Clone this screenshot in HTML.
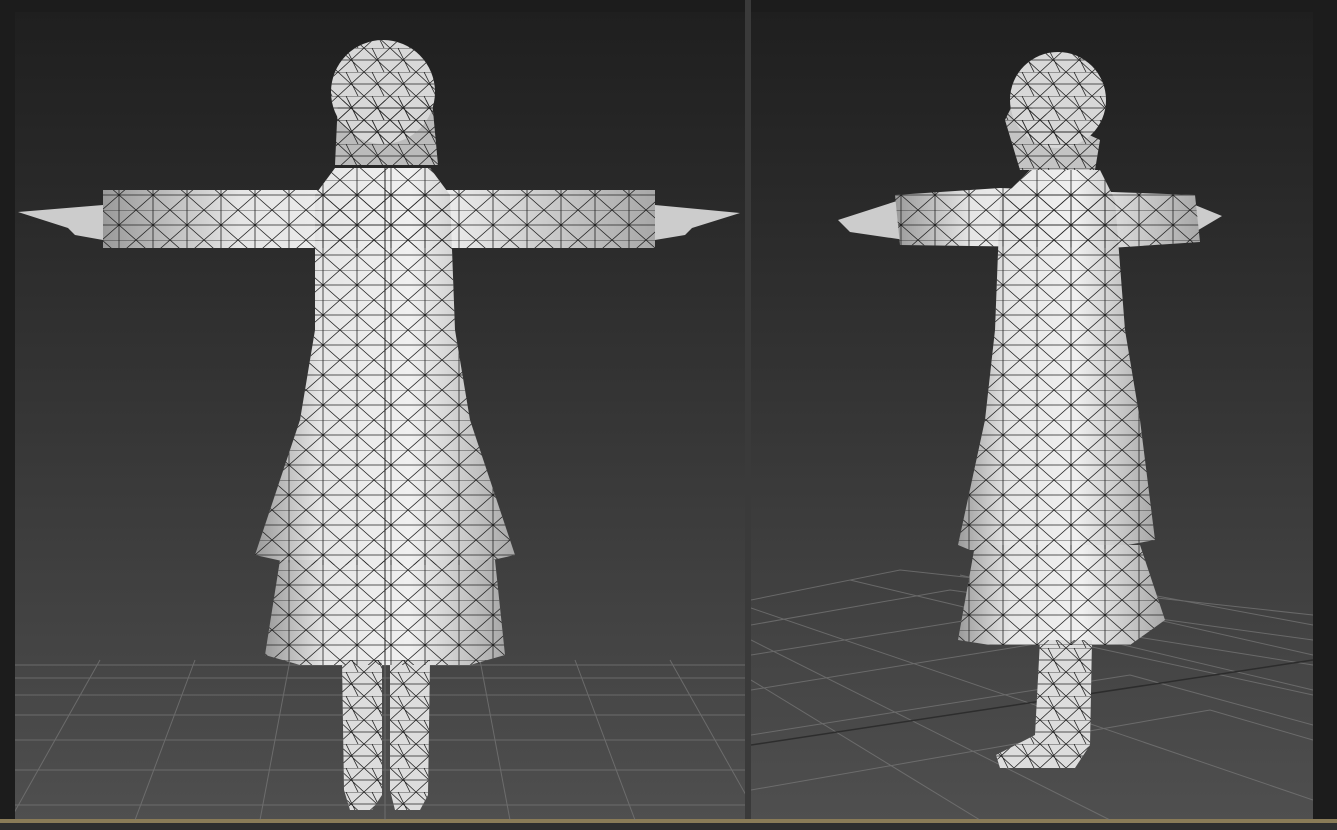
<!DOCTYPE html>
<html><head><meta charset="utf-8"><style>
html,body{margin:0;padding:0;background:#2b2b2b;width:1337px;height:830px;overflow:hidden}
svg{display:block}
</style></head><body>
<svg width="1337" height="830" viewBox="0 0 1337 830" xmlns="http://www.w3.org/2000/svg">
<defs>
<linearGradient id="bg" x1="0" y1="0" x2="0" y2="1">
<stop offset="0" stop-color="#1f1f1f"/><stop offset="0.45" stop-color="#333"/><stop offset="1" stop-color="#4f4f4f"/>
</linearGradient>
<linearGradient id="body" x1="0" y1="0" x2="1" y2="0">
<stop offset="0" stop-color="#9a9a9a"/><stop offset="0.25" stop-color="#e6e6e6"/><stop offset="0.6" stop-color="#f0f0f0"/><stop offset="1" stop-color="#a8a8a8"/>
</linearGradient>
<pattern id="mesh" width="34" height="30" patternUnits="userSpaceOnUse">
<path d="M0 0H34M0 15H34M0 0L17 15L34 0M0 30L17 15L34 30M17 0V30" stroke="#222" stroke-width="0.8" fill="none"/>
</pattern>
<pattern id="mesh2" width="26" height="24" patternUnits="userSpaceOnUse">
<path d="M0 0H26M0 12H26M0 0L13 12L26 0M0 24L13 12L26 24M8 0L20 24" stroke="#222" stroke-width="0.8" fill="none"/>
</pattern>
<clipPath id="cl"><rect x="15" y="12" width="730" height="808"/></clipPath>
<clipPath id="cr"><rect x="751" y="12" width="562" height="808"/></clipPath>
</defs>
<rect width="1337" height="830" fill="#1c1c1c"/>
<rect x="15" y="12" width="730" height="808" fill="url(#bg)"/>
<rect x="751" y="12" width="562" height="808" fill="url(#bg)"/>
<rect x="745" y="0" width="6" height="830" fill="#3a3a3a"/>
<rect x="0" y="819" width="1337" height="4" fill="#8a7b57"/>
<rect x="0" y="823" width="1337" height="7" fill="#2e2e2e"/>
<g clip-path="url(#cl)" stroke="#7a7a7a" stroke-width="1" opacity="0.7" fill="none">
<path d="M15 665H745M15 678H745M15 695H745M15 715H745M15 740H745M15 770H745M15 805H745"/>
<path d="M385 660V820M290 660L260 820M195 660L135 820M100 660L10 820M480 660L510 820M575 660L635 820M670 660L760 820"/>
</g>
<g clip-path="url(#cr)" stroke="#7a7a7a" stroke-width="1" opacity="0.7" fill="none">
<path d="M751 600L900 570L1313 615M751 625L950 590L1313 640M751 655L1000 615L1313 665M751 690L1060 640L1313 695M751 735L1130 675L1313 725M751 790L1210 710L1313 740"/>
<path d="M751 608L1313 800M751 640L1110 820M751 680L980 820M850 580L1313 690M960 575L1313 655M1060 578L1313 625"/>
<path d="M751 745L1313 660" stroke="#222" stroke-width="1.5"/>
</g>
<g>
<path d="M18 212L103 205L103 240L75 235L68 228Z" fill="#ccc"/>
<path d="M740 213L655 205L655 240L685 235L692 228Z" fill="#ccc"/>
<path d="M103 190H655V248H103Z" fill="url(#body)"/>
<path d="M335 168H430L450 195L455 330L470 420L515 555L470 565H300L255 555L300 420L315 330L315 195Z" fill="url(#body)"/>
<path d="M280 560H495L505 655L470 665H300L265 655Z" fill="url(#body)"/>
<path d="M342 660H382V795L372 810H350L344 790ZM390 660H430L428 795L420 810H395L390 790Z" fill="#ddd"/>
<path d="M338 100H432L438 165H335Z" fill="#bbb"/>
<circle cx="383" cy="92" r="52" fill="#d8d8d8"/>
<g fill="url(#mesh)">
<path d="M103 190H655V248H103Z"/>
<path d="M335 168H430L450 195L455 330L470 420L515 555L470 565H300L255 555L300 420L315 330L315 195Z"/>
<path d="M280 560H495L505 655L470 665H300L265 655Z"/>
<path d="M342 660H382V795L372 810H350L344 790ZM390 660H430L428 795L420 810H395L390 790Z" fill="url(#mesh2)"/>
<circle cx="383" cy="92" r="52" fill="url(#mesh2)"/>
<path d="M338 100H432L438 165H335Z" fill="url(#mesh2)"/>
</g>
<path d="M385 168V665" stroke="#222" stroke-width="1"/>
</g>
<g>
<path d="M838 220L900 200L905 240L850 232Z" fill="#ccc"/>
<path d="M1222 216L1195 205L1195 232Z" fill="#ccc"/>
<path d="M895 195L1000 188L1195 195L1200 242L1110 248L900 245Z" fill="url(#body)"/>
<path d="M1030 170H1100L1115 200L1125 330L1140 420L1155 540L1100 550H970L958 545L985 420L995 330L1000 200Z" fill="url(#body)"/>
<path d="M975 545H1140L1165 620L1130 645H990L958 640Z" fill="url(#body)"/>
<path d="M1040 640H1092L1090 745L1075 768H1000L996 755L1035 735Z" fill="#ddd"/>
<path d="M1015 100L1005 120L1020 170H1095L1100 140Z" fill="#c4c4c4"/>
<circle cx="1058" cy="100" r="48" fill="#d8d8d8"/>
<g fill="url(#mesh)">
<path d="M895 195L1000 188L1195 195L1200 242L1110 248L900 245Z"/>
<path d="M1030 170H1100L1115 200L1125 330L1140 420L1155 540L1100 550H970L958 545L985 420L995 330L1000 200Z"/>
<path d="M975 545H1140L1165 620L1130 645H990L958 640Z"/>
<path d="M1040 640H1092L1090 745L1075 768H1000L996 755L1035 735Z" fill="url(#mesh2)"/>
<circle cx="1058" cy="100" r="48" fill="url(#mesh2)"/>
<path d="M1015 100L1005 120L1020 170H1095L1100 140Z" fill="url(#mesh2)"/>
</g>
</g>
</svg>
</body></html>
